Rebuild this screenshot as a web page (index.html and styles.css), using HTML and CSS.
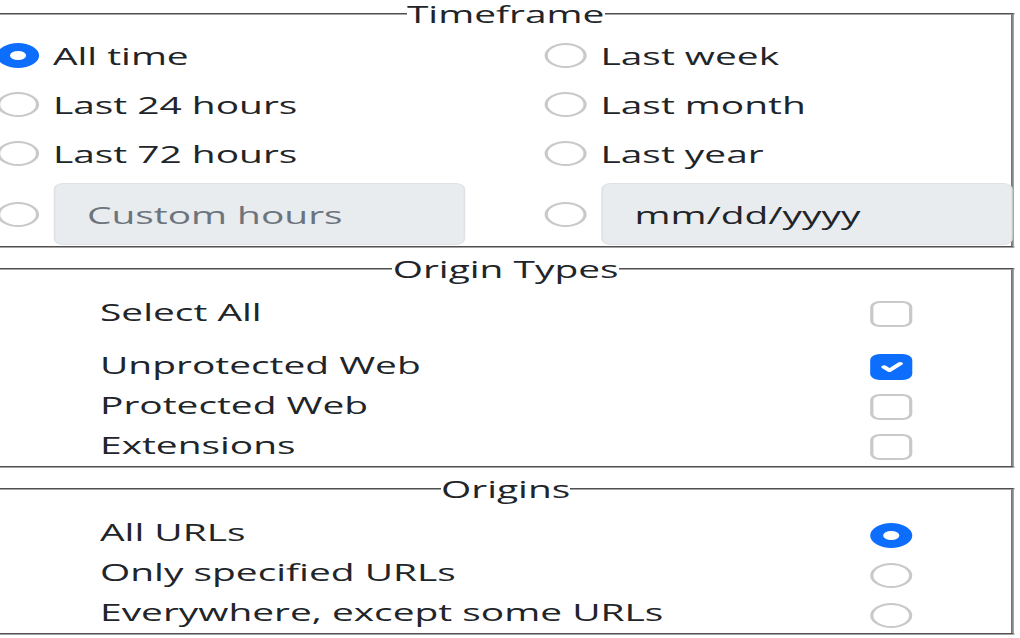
FILE: index.html
```html
<!DOCTYPE html>
<html lang="en">
<head>
<meta charset="utf-8">
<title>Filters</title>
<link rel="stylesheet" href="styles.css">
</head>
<body>
<div class="wrap">
  <fieldset class="group">
    <legend>Timeframe</legend>
    <div class="tf-grid">
      <label class="opt"><span class="radio on"></span><span>All time</span></label>
      <label class="opt"><span class="radio"></span><span>Last week</span></label>
      <label class="opt"><span class="radio"></span><span>Last 24 hours</span></label>
      <label class="opt"><span class="radio"></span><span>Last month</span></label>
      <label class="opt"><span class="radio"></span><span>Last 72 hours</span></label>
      <label class="opt"><span class="radio"></span><span>Last year</span></label>
      <div class="opt custom"><span class="radio"></span><input class="field" type="text" readonly placeholder="Custom hours"></div>
      <div class="opt custom"><span class="radio"></span><input class="field" type="text" readonly value="mm/dd/yyyy"></div>
    </div>
  </fieldset>

  <fieldset class="group">
    <legend>Origin Types</legend>
    <div class="list">
      <div class="row first"><span>Select All</span><span class="check"></span></div>
      <div class="row"><span>Unprotected Web</span><span class="check on"><svg viewBox="0 0 20 20"><path d="M6 10l3 3 6-6" fill="none" stroke="#fff" stroke-width="3" stroke-linecap="round" stroke-linejoin="round"/></svg></span></div>
      <div class="row"><span>Protected Web</span><span class="check"></span></div>
      <div class="row"><span>Extensions</span><span class="check"></span></div>
    </div>
  </fieldset>

  <fieldset class="group">
    <legend>Origins</legend>
    <div class="list origins">
      <div class="row"><span>All URLs</span><span class="radio on"></span></div>
      <div class="row"><span>Only specified URLs</span><span class="radio"></span></div>
      <div class="row"><span>Everywhere, except some URLs</span><span class="radio"></span></div>
    </div>
  </fieldset>
</div>
</body>
</html>
```

FILE: styles.css
```css
html, body {
  margin: 0;
  padding: 0;
  background: #ffffff;
}

body {
  padding-top: 1px;
  font-family: "Open Sans", "Noto Sans", sans-serif;
  font-size: 24px;
  color: #212529;
  overflow: hidden;
}

.wrap {
  width: 628px;
  margin-left: -3px;
  transform: scaleX(1.62);
  transform-origin: 0 0;
}

.group {
  margin: 0;
  padding: 0;
  min-width: 0;
  border: 2px groove #a4a4a4;
}

.group + .group {
  margin-top: 8px;
}

.group legend {
  margin: 0 auto;
  padding: 0;
  font-size: 24px;
  line-height: 26px;
  color: #212529;
}

.tf-grid {
  display: grid;
  grid-template-columns: 336px 1fr;
  padding: 4px 0 1px 0;
}

.opt {
  display: flex;
  align-items: center;
  gap: 8.5px;
  line-height: 49px;
  cursor: pointer;
}

.tf-grid .opt:nth-child(odd) {
  margin-left: -2px;
}

.opt.custom {
  padding-top: 5px;
  line-height: normal;
}

.radio {
  flex: none;
  width: 26px;
  height: 25px;
  box-sizing: border-box;
  border: 2px solid #c9c9c9;
  border-radius: 50%;
  background: #ffffff;
}

.radio.on {
  border: 8.5px solid #0d6efd;
}

.field {
  width: 254px;
  height: 62px;
  box-sizing: border-box;
  margin: 0;
  padding: 0 20px;
  border: 1px solid #dee2e6;
  border-radius: 6px;
  background: #e9ecef;
  font: inherit;
  color: #212529;
  outline: none;
}

.field::placeholder {
  color: #6c757d;
  opacity: 1;
}

.list {
  padding: 9.5px 61px 1.5px 61.6px;
}

.row {
  display: flex;
  align-items: center;
  justify-content: space-between;
  line-height: 40px;
}

.row.first {
  margin-bottom: 13px;
}

.check {
  flex: none;
  display: block;
  width: 26px;
  height: 26px;
  box-sizing: border-box;
  margin-top: 5px;
  border: 2px solid #c9c9c9;
  border-radius: 6px;
  background: #ffffff;
}

.check.on {
  background: #0d6efd;
  border-color: #0d6efd;
}

.check svg {
  display: block;
  width: 100%;
  height: 100%;
}

.origins .radio {
  margin-top: 7px;
}
```
